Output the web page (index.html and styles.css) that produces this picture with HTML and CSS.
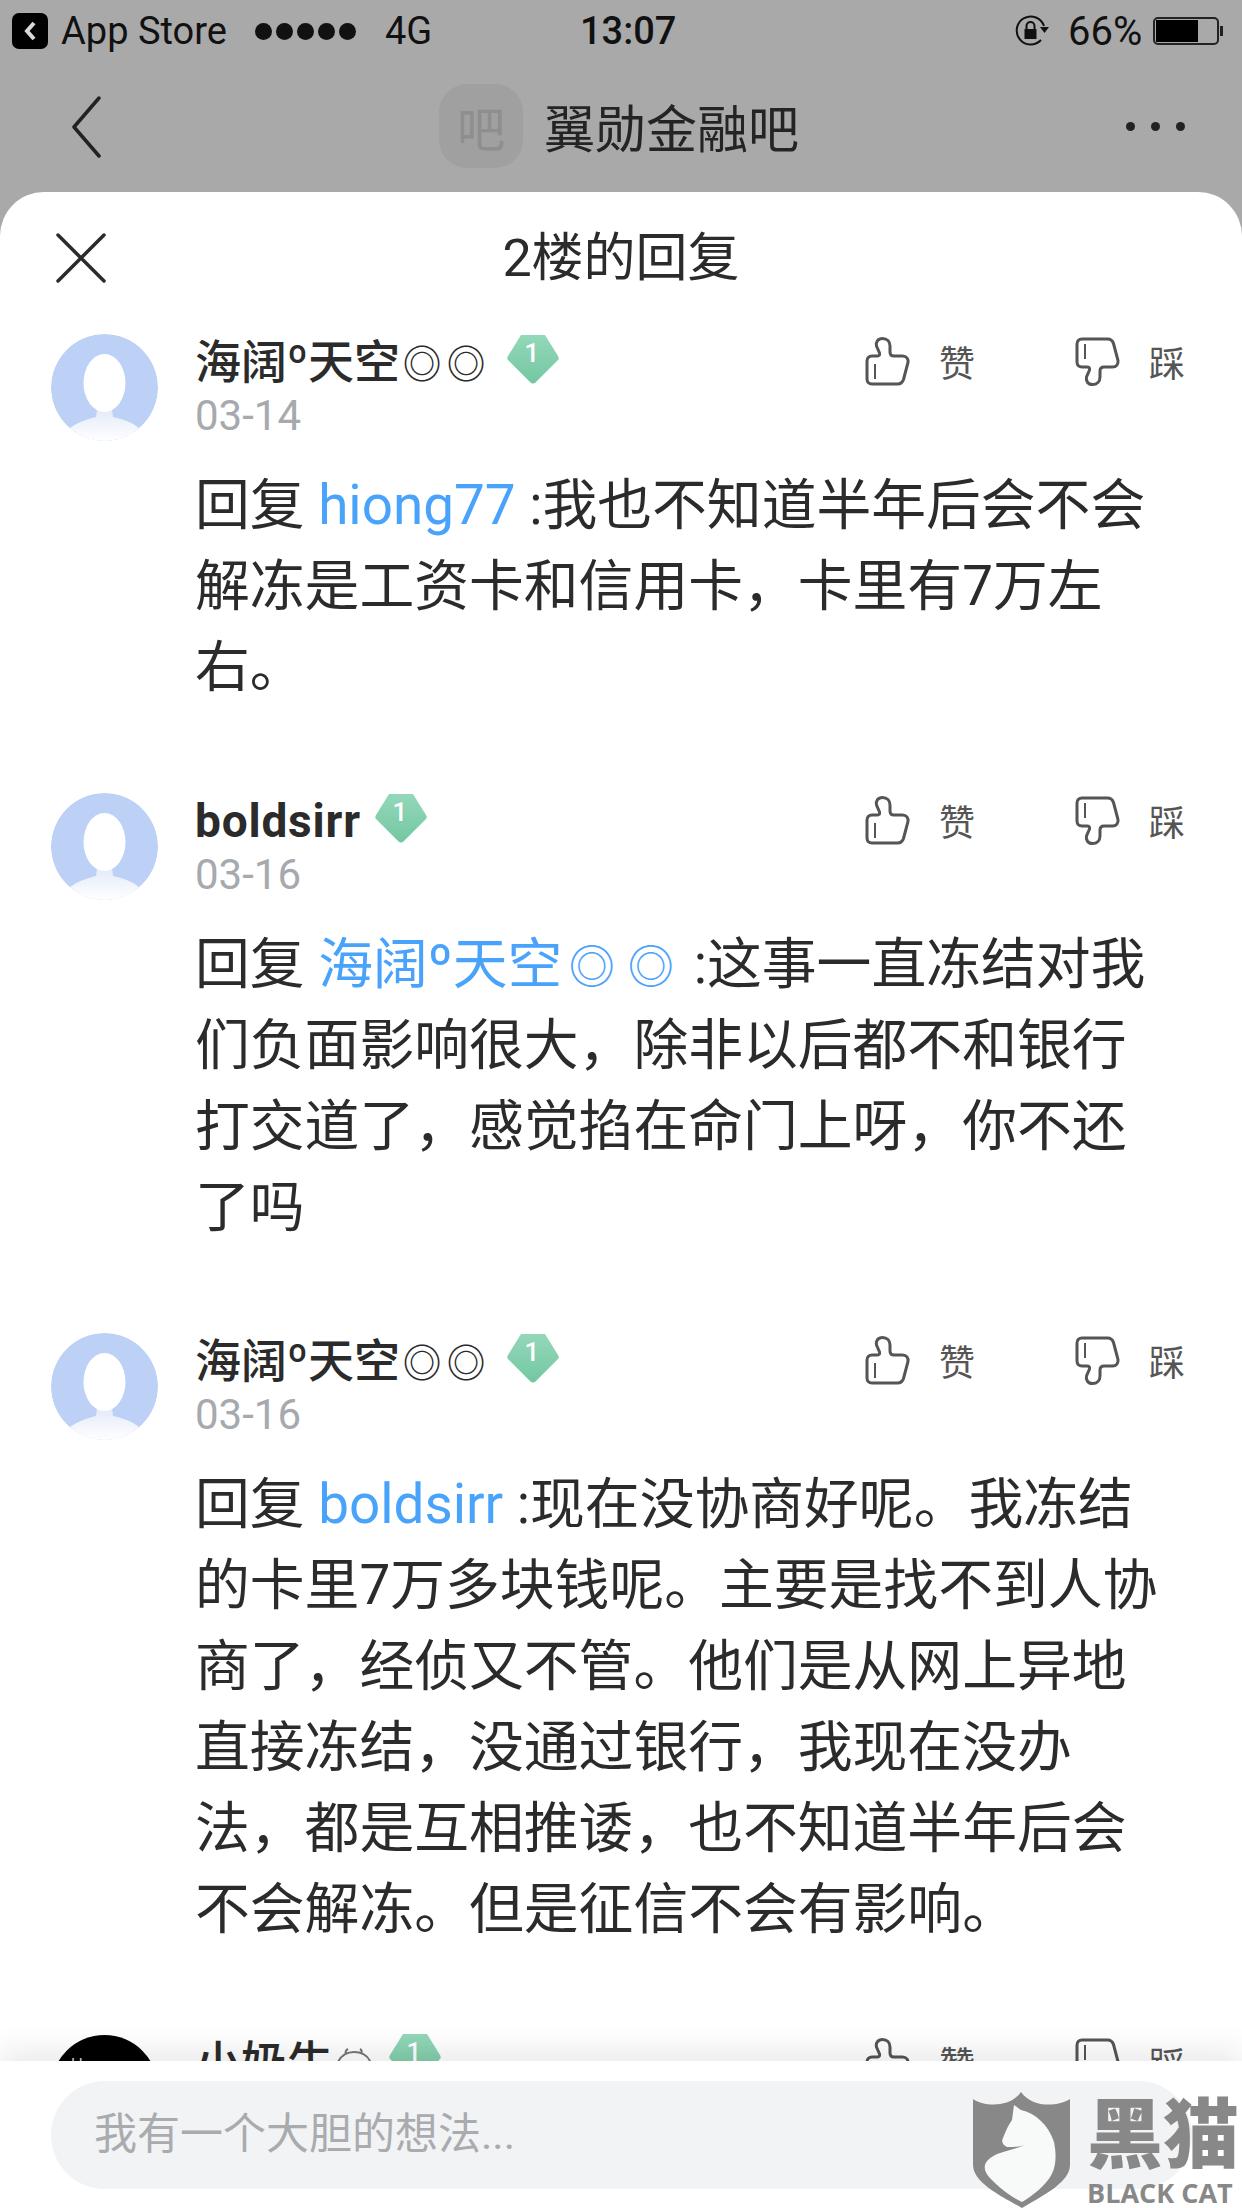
FILE: index.html
```html
<!DOCTYPE html>
<html>
<head>
    <meta charset="utf-8">
    <link rel="stylesheet" href="styles.css">
    <title>2楼的回复</title>
</head>
<body>
    <svg class="defs" width="0" height="0">
        <symbol id="thumb" viewBox="0 0 46 49">
            <path d="M7 19h5c2 0 3-1 2.500-3L11.500 9C10.500 5 13 1.500 17.500 1.500S25 4.500 25 9v6c0 2.500 1.500 4 4 4h8.500c4 0 6 3 5.500 6.500l-4.500 17c-1 3-3 4.500-6 4.500H7c-3 0-5-2-5-5V24c0-3 2-5 5-5z" fill="none" stroke="currentColor" stroke-width="3"/>
            <path d="M10 27v15" fill="none" stroke="currentColor" stroke-width="2"/>
        </symbol>
        <symbol id="gem" viewBox="0 0 52 50">
            <defs>
                <linearGradient id="gemFill" x1="0" y1="0" x2="0" y2="1">
                    <stop offset="0" stop-color="#93d8b9"/>
                    <stop offset="1" stop-color="#74c7a2"/>
                </linearGradient>
            </defs>
            <path d="M14 1h24l13 21c1 2 1 3 0 4L29 48c-2 2-4 2-6 0L1 26c-1-1-1-2 0-4z" fill="url(#gemFill)"/>
            <text x="25" y="28" class="gem-num">1</text>
        </symbol>
    </svg>

    <div class="status">
        <div class="status-left">
            <span class="back-app">
                <svg width="14" height="22" viewBox="0 0 14 22"><path d="M11 3l-7 8 7 8" fill="none" stroke="#d8d8d8" stroke-width="4"/></svg>
            </span>
            <span class="app-name">App Store</span>
            <span class="signal"><i></i><i></i><i></i><i></i><i></i></span>
            <span class="net">4G</span>
        </div>
        <div class="time">13:07</div>
        <div class="status-right">
            <svg class="lock" width="35" height="35" viewBox="0 0 35 35">
                <path d="M27 26A14 14 0 1 1 30 12" fill="none" stroke="#111" stroke-width="2"/>
                <path d="M26 13h9l-4.500 6z" fill="#111"/>
                <rect x="10.500" y="15" width="12" height="10" fill="#111"/>
                <path d="M12.500 15v-3a4 4 0 0 1 8 0v3" fill="none" stroke="#111" stroke-width="2"/>
            </svg>
            <span class="batt-text">66%</span>
            <span class="battery"><span class="battery-fill"></span></span>
        </div>
    </div>

    <div class="nav">
        <svg class="nav-back" width="32" height="62" viewBox="0 0 32 62"><path d="M29 2L4 31l25 29" fill="none" stroke="#222" stroke-width="3.500" stroke-linecap="round" stroke-linejoin="round"/></svg>
        <div class="nav-title">
            <span class="bar-badge">吧</span>
            <span class="bar-name">翼勋金融吧</span>
        </div>
        <div class="nav-more"><i></i><i></i><i></i></div>
    </div>

    <div class="sheet">
        <div class="sheet-head">
            <svg class="close" width="50" height="50" viewBox="0 0 50 50"><path d="M2 2l46 46M48 2L2 48" fill="none" stroke="#2b2b2b" stroke-width="3.500" stroke-linecap="round"/></svg>
            <span class="sheet-title">2楼的回复</span>
        </div>

        <div class="list">
            <div class="comment">
                <div class="avatar">
                    <svg width="107" height="107" viewBox="0 0 107 107">
                        <defs>
                            <linearGradient id="chest" x1="0" y1="0" x2="0" y2="1">
                                <stop offset="0" stop-color="#e3eaf8"/>
                                <stop offset="1" stop-color="#ffffff"/>
                            </linearGradient>
                        </defs>
                        <circle cx="53.500" cy="53.500" r="53.500" fill="#bdd0f5"/>
                        <path d="M19 94c8-6 18-9 26-11l1-8h15l1 8c9 2 19 5 26 11-9 8-21 13-34.500 13S28 102 19 94z" fill="url(#chest)"/>
                        <ellipse cx="53.500" cy="49" rx="21" ry="29" fill="#fff"/>
                    </svg>
                </div>
                <div class="main">
                    <div class="head">
                        <div class="who">
                            <span class="name">海阔º天空<span class="sym">◎</span><span class="sym">◎</span></span>
                            <svg class="gem" width="52" height="50"><use href="#gem"/></svg>
                        </div>
                        <div class="actions">
                            <span class="act"><svg class="ico" width="46" height="49"><use href="#thumb"/></svg><span>赞</span></span>
                            <span class="act"><svg class="ico down" width="46" height="49"><use href="#thumb"/></svg><span>踩</span></span>
                        </div>
                    </div>
                    <div class="date">03-14</div>
                    <p class="text">回复 <a class="at">hiong77</a> :我也不知道半年后会不会<br>解冻是工资卡和信用卡，卡里有7万左<br>右。</p>
                </div>
            </div>

            <div class="comment">
                <div class="avatar">
                    <svg width="107" height="107" viewBox="0 0 107 107">
                        <circle cx="53.500" cy="53.500" r="53.500" fill="#bdd0f5"/>
                        <path d="M19 94c8-6 18-9 26-11l1-8h15l1 8c9 2 19 5 26 11-9 8-21 13-34.500 13S28 102 19 94z" fill="url(#chest)"/>
                        <ellipse cx="53.500" cy="49" rx="21" ry="29" fill="#fff"/>
                    </svg>
                </div>
                <div class="main">
                    <div class="head">
                        <div class="who">
                            <span class="name name-latin">boldsirr</span>
                            <svg class="gem" width="52" height="50"><use href="#gem"/></svg>
                        </div>
                        <div class="actions">
                            <span class="act"><svg class="ico" width="46" height="49"><use href="#thumb"/></svg><span>赞</span></span>
                            <span class="act"><svg class="ico down" width="46" height="49"><use href="#thumb"/></svg><span>踩</span></span>
                        </div>
                    </div>
                    <div class="date">03-16</div>
                    <p class="text">回复 <a class="at">海阔º天空<span class="sym">◎</span><span class="sym">◎</span></a> :这事一直冻结对我<br>们负面影响很大，除非以后都不和银行<br>打交道了，感觉掐在命门上呀，你不还<br>了吗</p>
                </div>
            </div>

            <div class="comment">
                <div class="avatar">
                    <svg width="107" height="107" viewBox="0 0 107 107">
                        <circle cx="53.500" cy="53.500" r="53.500" fill="#bdd0f5"/>
                        <path d="M19 94c8-6 18-9 26-11l1-8h15l1 8c9 2 19 5 26 11-9 8-21 13-34.500 13S28 102 19 94z" fill="url(#chest)"/>
                        <ellipse cx="53.500" cy="49" rx="21" ry="29" fill="#fff"/>
                    </svg>
                </div>
                <div class="main">
                    <div class="head">
                        <div class="who">
                            <span class="name">海阔º天空<span class="sym">◎</span><span class="sym">◎</span></span>
                            <svg class="gem" width="52" height="50"><use href="#gem"/></svg>
                        </div>
                        <div class="actions">
                            <span class="act"><svg class="ico" width="46" height="49"><use href="#thumb"/></svg><span>赞</span></span>
                            <span class="act"><svg class="ico down" width="46" height="49"><use href="#thumb"/></svg><span>踩</span></span>
                        </div>
                    </div>
                    <div class="date">03-16</div>
                    <p class="text">回复 <a class="at">boldsirr</a> :现在没协商好呢。我冻结<br>的卡里7万多块钱呢。主要是找不到人协<br>商了，经侦又不管。他们是从网上异地<br>直接冻结，没通过银行，我现在没办<br>法，都是互相推诿，也不知道半年后会<br>不会解冻。但是征信不会有影响。</p>
                </div>
            </div>

            <div class="comment">
                <div class="avatar avatar-dark">I Love you</div>
                <div class="main">
                    <div class="head">
                        <div class="who">
                            <span class="name">小奶牛</span>
                            <svg class="cow" width="38" height="34" viewBox="0 0 38 34"><path d="M3 16c3-6 9-10 16-10s13 3 16 9c1 3-1 6-4 6H8c-3 0-6-2-5-5zM11 8c-1-2 0-4 2-5M26 8c1-2 1-4-1-5" fill="#fff" stroke="#777" stroke-width="2"/></svg>
                            <svg class="gem gem-raised" width="52" height="50"><use href="#gem"/></svg>
                        </div>
                        <div class="actions">
                            <span class="act"><svg class="ico" width="46" height="49"><use href="#thumb"/></svg><span>赞</span></span>
                            <span class="act"><svg class="ico down" width="46" height="49"><use href="#thumb"/></svg><span>踩</span></span>
                        </div>
                    </div>
                </div>
            </div>
        </div>

        <div class="reply-bar">
            <div class="reply-input">我有一个大胆的想法...</div>
        </div>
    </div>

    <div class="watermark">
        <svg width="98" height="116" viewBox="0 0 98 116">
            <path d="M0 7c10 7 36 10 48-7 12 17 38 14 49 7v66c0 18-30 32-48 43C30 105 0 91 0 73z" fill="#888"/>
            <path d="M41 13l7 5c14 3 27 14 33 32 3 15 2 28-6 38-6 8-16 16-26 22-10-5-22-13-33-25-5-6-6-12-1-17 8-8 22-9 37-15-6 2-12 2-18 2-4-2-6-5-4-9 3-8 6-14 9-18z" fill="#f8f9f9"/>
        </svg>
        <div class="mark-text">
            <span class="mark-cn">黑猫</span>
            <span class="mark-en">BLACK CAT</span>
        </div>
    </div>
</body>
</html>
```

FILE: styles.css
```css
html, body {
    margin: 0;
    padding: 0;
}
body {
    position: relative;
    width: 1242px;
    height: 2208px;
    overflow: hidden;
    background: #a9a9a9;
    color: #2b2b2b;
    font-family: Roboto, "Noto Sans CJK SC", sans-serif;
    display: flex;
    flex-direction: column;
}
.defs {
    position: absolute;
}
.gem-num {
    fill: #fff;
    font-size: 26px;
    font-weight: 500;
    text-anchor: middle;
}

/* status bar */
.status {
    height: 60px;
    box-sizing: border-box;
    padding: 2px 20px 0 12px;
    display: flex;
    align-items: center;
    color: #111;
    font-size: 38px;
    flex-shrink: 0;
}
.status-left {
    display: flex;
    align-items: center;
    width: 568px;
}
.back-app {
    width: 36px;
    height: 36px;
    background: #000;
    border-radius: 7px;
    display: flex;
    align-items: center;
    justify-content: center;
    margin-right: 13px;
}
.app-name {
    width: 194px;
}
.signal {
    display: flex;
    gap: 4px;
    width: 130px;
}
.signal i {
    width: 17px;
    height: 17px;
    background: #111;
    border-radius: 50%;
}
.time {
    font-size: 38px;
    font-weight: 500;
    width: 434px;
}
.status-right {
    display: flex;
    align-items: center;
}
.batt-text {
    font-size: 40px;
    margin: 0 11px 0 19px;
}
.battery {
    position: relative;
    width: 66px;
    height: 28px;
    border: 2px solid #222;
    border-radius: 5px;
    box-sizing: border-box;
    padding: 1px;
    display: block;
}
.battery::after {
    content: "";
    position: absolute;
    right: -6px;
    top: 7px;
    width: 3px;
    height: 10px;
    background: #222;
}
.battery-fill {
    display: block;
    width: 42px;
    height: 100%;
    background: #000;
}

/* page title behind the sheet */
.nav {
    height: 132px;
    padding: 0 57px 0 70px;
    display: flex;
    align-items: center;
    justify-content: space-between;
    flex-shrink: 0;
}
.nav-back {
    margin-top: 2px;
}
.nav-title {
    display: flex;
    align-items: center;
    gap: 21px;
    margin-left: 10px;
}
.bar-badge {
    width: 84px;
    height: 84px;
    background: #a0a0a0;
    border-radius: 28px;
    color: #8e8e8e;
    font-size: 48px;
    display: flex;
    align-items: center;
    justify-content: center;
}
.bar-name {
    font-size: 51px;
    color: #242424;
}
.nav-more {
    display: flex;
    gap: 16px;
}
.nav-more i {
    width: 9px;
    height: 9px;
    background: #222;
    border-radius: 50%;
}

/* reply sheet */
.sheet {
    flex: 1;
    min-height: 0;
    background: #fff;
    border-radius: 44px 44px 0 0;
    display: flex;
    flex-direction: column;
}
.sheet-head {
    height: 132px;
    box-sizing: border-box;
    padding-bottom: 9px;
    position: relative;
    display: flex;
    align-items: center;
    justify-content: center;
    flex-shrink: 0;
}
.close {
    position: absolute;
    left: 56px;
    top: 41px;
}
.sheet-title {
    font-size: 52px;
}
.list {
    flex: 1;
    min-height: 0;
    overflow: hidden;
    padding: 10px 0 0 51px;
    display: flex;
    flex-direction: column;
    gap: 85px;
}
.comment {
    display: flex;
    gap: 37px;
    flex-shrink: 0;
}
.avatar {
    width: 107px;
    height: 107px;
    border-radius: 50%;
    flex-shrink: 0;
    overflow: hidden;
}
.avatar svg {
    display: block;
}
.avatar-dark {
    box-sizing: border-box;
    padding-top: 20px;
    background: #000;
    color: #ddd;
    font-size: 15px;
    line-height: 18px;
    text-align: center;
}
.main {
    flex: 1;
    min-width: 0;
}
.head {
    height: 56px;
    display: flex;
    align-items: center;
    justify-content: space-between;
    padding-right: 57px;
}
.who {
    display: flex;
    align-items: center;
}
.name {
    font-size: 46px;
    font-weight: 500;
    line-height: 56px;
    color: #2b2b2b;
}
.name-latin {
    font-weight: 700;
    letter-spacing: 0.8px;
}
.name-latin + .gem {
    margin-left: 14px;
}
.sym {
    font-size: 0.84em;
    line-height: 0;
    margin: 0 0.07em;
}
.at .sym {
    margin: 0 0.14em;
}
.gem {
    margin-left: 19px;
    margin-top: -6px;
}
.cow {
    margin-left: 2px;
}
.gem-raised {
    margin-left: 16px;
    margin-top: -10px;
}
.actions {
    display: flex;
    gap: 100px;
    margin-top: -2px;
}
.act {
    display: flex;
    align-items: center;
    gap: 28px;
    color: #555;
    font-size: 36px;
}
.ico {
    display: block;
    color: #555;
}
.ico.down {
    transform: scaleY(-1);
}
.date {
    font-size: 42px;
    line-height: 50px;
    color: #a6a9ad;
    margin-top: 1px;
}
.text {
    margin: 24px 0 0;
    font-size: 54.8px;
    line-height: 81px;
    color: #2b2b2b;
    white-space: nowrap;
}
.at {
    color: #4aa3fb;
}

/* reply box */
.reply-bar {
    height: 147px;
    box-sizing: border-box;
    padding: 20px 50px 19px 51px;
    background: #fff;
    box-shadow: 0 -10px 30px rgba(0, 0, 0, 0.09);
    position: relative;
    flex-shrink: 0;
}
.reply-input {
    height: 108px;
    box-sizing: border-box;
    padding: 0 0 10px 43px;
    background: #f2f3f5;
    border-radius: 54px;
    display: flex;
    align-items: center;
    font-size: 43px;
    color: #a9abae;
}

/* corner watermark */
.watermark {
    position: absolute;
    left: 973px;
    top: 2092px;
    width: 269px;
    display: flex;
    gap: 16px;
}
.mark-text {
    display: flex;
    flex-direction: column;
    color: #888;
    margin-top: 2px;
}
.mark-cn {
    font-size: 76px;
    font-weight: 900;
    line-height: 84px;
    white-space: nowrap;
}
.mark-en {
    font-size: 27px;
    font-weight: 700;
    line-height: 30px;
    white-space: nowrap;
    font-family: "Open Sans", sans-serif;
}
```
